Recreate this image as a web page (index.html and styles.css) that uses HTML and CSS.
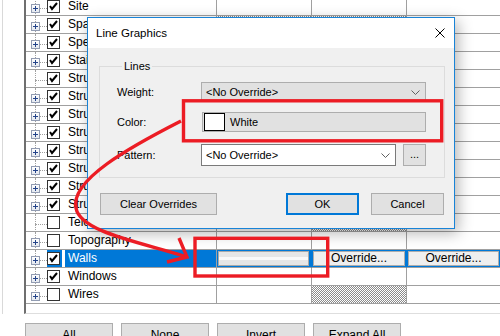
FILE: index.html
```html
<!DOCTYPE html>
<html lang="en">
<head>
    <meta charset="UTF-8">
    <meta name="viewport" content="width=device-width, initial-scale=1.0">
    <title>Visibility/Graphics - Line Graphics</title>
    <link rel="stylesheet" href="styles.css">
</head>
<body>
    <div class="main">
        <div class="gutter"></div>
        <div class="grid">
            <div class="row">
                <div class="cell name"><i class="node plus"></i><span class="box"><b class="check"><svg viewBox="0 0 11 11"><polyline points="2,5 4,8 9,2"/></svg></b></span><span class="label">Site</span></div>
                <div class="cell"></div><div class="cell"></div><div class="cell"></div>
            </div>
            <div class="row">
                <div class="cell name"><i class="node plus"></i><span class="box"><b class="check"><svg viewBox="0 0 11 11"><polyline points="2,5 4,8 9,2"/></svg></b></span><span class="label">Spaces</span></div>
                <div class="cell hatch"></div><div class="cell hatch"></div><div class="cell"></div>
            </div>
            <div class="row">
                <div class="cell name"><i class="node plus"></i><span class="box"><b class="check"><svg viewBox="0 0 11 11"><polyline points="2,5 4,8 9,2"/></svg></b></span><span class="label">Specialty Equipment</span></div>
                <div class="cell"></div><div class="cell"></div><div class="cell"></div>
            </div>
            <div class="row">
                <div class="cell name"><i class="node plus"></i><span class="box"><b class="check"><svg viewBox="0 0 11 11"><polyline points="2,5 4,8 9,2"/></svg></b></span><span class="label">Stairs</span></div>
                <div class="cell"></div><div class="cell"></div><div class="cell"></div>
            </div>
            <div class="row">
                <div class="cell name"><i class="node leaf"></i><span class="box"><b class="check"><svg viewBox="0 0 11 11"><polyline points="2,5 4,8 9,2"/></svg></b></span><span class="label">Structural Area Reinforcement</span></div>
                <div class="cell"></div><div class="cell"></div><div class="cell"></div>
            </div>
            <div class="row">
                <div class="cell name"><i class="node plus"></i><span class="box"><b class="check"><svg viewBox="0 0 11 11"><polyline points="2,5 4,8 9,2"/></svg></b></span><span class="label">Structural Beam Systems</span></div>
                <div class="cell"></div><div class="cell"></div><div class="cell"></div>
            </div>
            <div class="row">
                <div class="cell name"><i class="node plus"></i><span class="box"><b class="check"><svg viewBox="0 0 11 11"><polyline points="2,5 4,8 9,2"/></svg></b></span><span class="label">Structural Columns</span></div>
                <div class="cell"></div><div class="cell"></div><div class="cell"></div>
            </div>
            <div class="row">
                <div class="cell name"><i class="node plus"></i><span class="box"><b class="check"><svg viewBox="0 0 11 11"><polyline points="2,5 4,8 9,2"/></svg></b></span><span class="label">Structural Connections</span></div>
                <div class="cell"></div><div class="cell"></div><div class="cell"></div>
            </div>
            <div class="row">
                <div class="cell name"><i class="node plus"></i><span class="box"><b class="check"><svg viewBox="0 0 11 11"><polyline points="2,5 4,8 9,2"/></svg></b></span><span class="label">Structural Fabric Areas</span></div>
                <div class="cell"></div><div class="cell"></div><div class="cell"></div>
            </div>
            <div class="row">
                <div class="cell name"><i class="node plus"></i><span class="box"><b class="check"><svg viewBox="0 0 11 11"><polyline points="2,5 4,8 9,2"/></svg></b></span><span class="label">Structural Fabric Reinforcement</span></div>
                <div class="cell"></div><div class="cell"></div><div class="cell"></div>
            </div>
            <div class="row">
                <div class="cell name"><i class="node plus"></i><span class="box"><b class="check"><svg viewBox="0 0 11 11"><polyline points="2,5 4,8 9,2"/></svg></b></span><span class="label">Structural Foundations</span></div>
                <div class="cell"></div><div class="cell"></div><div class="cell"></div>
            </div>
            <div class="row">
                <div class="cell name"><i class="node plus"></i><span class="box"><b class="check"><svg viewBox="0 0 11 11"><polyline points="2,5 4,8 9,2"/></svg></b></span><span class="label">Structural Framing</span></div>
                <div class="cell"></div><div class="cell"></div><div class="cell"></div>
            </div>
            <div class="row">
                <div class="cell name"><i class="node leaf"></i><span class="box"><b class="check"></b></span><span class="label">Telephone Devices</span></div>
                <div class="cell"></div><div class="cell hatch"></div><div class="cell"></div>
            </div>
            <div class="row">
                <div class="cell name"><i class="node plus"></i><span class="box"><b class="check"></b></span><span class="label">Topography</span></div>
                <div class="cell"></div><div class="cell"></div><div class="cell"></div>
            </div>
            <div class="row sel">
                <div class="cell name"><i class="node plus"></i><span class="box"><b class="check"><svg viewBox="0 0 11 11"><polyline points="2,5 4,8 9,2"/></svg></b></span><span class="label">Walls</span></div>
                <div class="cell"><span class="line-btn"></span></div>
                <div class="cell"><span class="grid-btn">Override...</span></div>
                <div class="cell"><span class="grid-btn">Override...</span></div>
            </div>
            <div class="row">
                <div class="cell name"><i class="node plus"></i><span class="box"><b class="check"><svg viewBox="0 0 11 11"><polyline points="2,5 4,8 9,2"/></svg></b></span><span class="label">Windows</span></div>
                <div class="cell"></div><div class="cell"></div><div class="cell"></div>
            </div>
            <div class="row">
                <div class="cell name"><i class="node plus"></i><span class="box"><b class="check"></b></span><span class="label">Wires</span></div>
                <div class="cell"></div><div class="cell hatch"></div><div class="cell"></div>
            </div>
        </div>
    </div>

    <div class="actions">
        <button>All</button>
        <button>None</button>
        <button>Invert</button>
        <button>Expand All</button>
    </div>

    <div class="dialog">
        <div class="dialog-title">
            <span>Line Graphics</span>
            <svg class="close" width="10" height="10" viewBox="0 0 10 10"><path d="M0.5 0.5 9.5 9.5M9.5 0.5 0.5 9.5"/></svg>
        </div>
        <div class="dialog-body">
            <div class="group">
                <span class="group-title">Lines</span>
                <div class="field">
                    <label>Weight:</label>
                    <div class="combo">&lt;No Override&gt;<svg class="chev" width="9" height="5" viewBox="0 0 9 5"><path d="M0.5 0.5 4.5 4.5 8.5 0.5"/></svg></div>
                </div>
                <div class="field gap-1">
                    <label>Color:</label>
                    <div class="color-btn"><span class="swatch"></span>White</div>
                </div>
                <div class="field gap-2 tall">
                    <label>Pattern:</label>
                    <div class="combo edit">&lt;No Override&gt;<svg class="chev" width="9" height="5" viewBox="0 0 9 5"><path d="M0.5 0.5 4.5 4.5 8.5 0.5"/></svg></div>
                    <div class="more">...</div>
                </div>
            </div>
            <div class="dialog-buttons">
                <button class="wide">Clear Overrides</button>
                <div class="right">
                    <button class="default">OK</button>
                    <button>Cancel</button>
                </div>
            </div>
        </div>
    </div>

    <!-- red markup drawn over the screenshot -->
    <svg class="marks" width="500" height="336" viewBox="0 0 500 336">
        <rect x="183.5" y="100.8" width="258.2" height="40" />
        <rect x="195" y="238.3" width="132.7" height="37.7" />
        <path d="M181 121 C130 147 70 180 76 208 C80 232 140 242 187 257" />
        <path d="M179 238 L187 257 L167 262" />
    </svg>
</body>
</html>
```

FILE: styles.css
```css
* {
    box-sizing: border-box;
}

body {
    margin: 0;
    width: 500px;
    height: 336px;
    overflow: hidden;
    position: relative;
    background: #fff;
    color: #000;
    font-family: "Liberation Sans", Arial, sans-serif;
    font-size: 12px;
}

.main {
    display: flex;
    margin-top: -2px;
}

.gutter {
    width: 22px;
    margin-left: 2px;
    border-left: 1px solid #d9d9d9;
}

.grid {
    flex: 1;
    border-left: 2px solid #6f6f6f;
    border-bottom: 1px solid #dedede;
    padding-bottom: 9px;
}

.row {
    display: grid;
    grid-template-columns: 191px 95px 95px 1fr;
    height: 18px;
}

.cell {
    border-right: 1px solid #a0a0a0;
    border-bottom: 1px solid #a0a0a0;
}

.cell:last-child {
    border-right: none;
}

.cell.hatch {
    background: repeating-conic-gradient(#8a8a8a 0 25%, #fff 0 50%) 0 0 / 2px 2px;
}

.name {
    display: flex;
    align-items: flex-start;
    position: relative;
}

.name::before {
    content: "";
    position: absolute;
    left: 9px;
    top: 0;
    bottom: -1px;
    border-left: 1px dotted #a0a0a0;
}

.row:last-child .name::before {
    bottom: 8px;
}

.node {
    flex: none;
    width: 9px;
    height: 9px;
    margin: 6px 0 0 5px;
    position: relative;
}

.node::after {
    content: "";
    position: absolute;
    top: 4px;
    left: 4px;
    width: 12px;
    border-top: 1px dotted #a0a0a0;
}

.node.plus {
    z-index: 1;
    border: 1px solid #929cb2;
    background:
        linear-gradient(#23438a, #23438a) center / 5px 1px no-repeat,
        linear-gradient(#23438a, #23438a) center / 1px 5px no-repeat,
        linear-gradient(#fff, #e4e8ef);
}

.node.plus::after {
    top: 3px;
    left: 8px;
    width: 7px;
}

.box {
    flex: none;
    width: 15px;
    height: 17px;
    margin-left: 7px;
    padding-top: 2px;
}

.check {
    display: block;
    width: 13px;
    height: 13px;
    border: 1px solid #333;
    background: #fff;
}

.check svg {
    display: block;
    width: 11px;
    height: 11px;
    fill: none;
    stroke: #000;
    stroke-width: 2;
}

.label {
    flex: 1;
    height: 17px;
    margin-left: 3px;
    padding-left: 3px;
    line-height: 17px;
    white-space: nowrap;
    overflow: hidden;
}

.sel .box,
.sel .label {
    background: #0078d7;
}

.sel .label {
    color: #fff;
}

.sel .cell:not(.name) {
    display: flex;
    padding: 1px;
    background: #0078d7;
    border-right-color: #0078d7;
}

.sel .cell:nth-child(2) {
    padding-right: 2px;
}

.line-btn {
    flex: 1;
    border: 1px solid #a9a9a9;
    background: linear-gradient(#e6e6e6 0 40%, #f9f9f9 40% 60%, #e6e6e6 60%);
}

.grid-btn {
    flex: 1;
    border: 1px solid #adadad;
    background: #efefef;
    text-align: center;
    line-height: 13px;
}

.actions {
    display: flex;
    gap: 8px;
    margin: 9px 0 0 25px;
}

button {
    font-family: inherit;
    font-size: 12px;
    color: #000;
    background: #e1e1e1;
    border: 1px solid #adadad;
    padding: 0;
}

.actions button {
    width: 88px;
    height: 23px;
}

/* dialog */

.dialog {
    position: absolute;
    left: 87px;
    top: 17px;
    width: 368px;
    height: 212px;
    border: 1px solid #1883d7;
    background: #f0f0f0;
    box-shadow: 3px 4px 14px rgba(0, 0, 0, 0.3);
    font-size: 11px;
}

.dialog-title {
    height: 30px;
    display: flex;
    align-items: center;
    justify-content: space-between;
    padding: 0 9px 0 8px;
    background: #fff;
    font-size: 11.5px;
}

.close {
    stroke: #000;
    stroke-width: 1;
}

.dialog-body {
    padding: 18px 9px 0 11px;
}

.group {
    border: 1px solid #dcdcdc;
    padding: 0 17px 11px 17px;
}

.group-title {
    display: block;
    width: max-content;
    height: 15px;
    line-height: 15px;
    margin: -8px 0 0 5px;
    padding: 0 2px;
    background: #f0f0f0;
}

.field {
    display: flex;
    align-items: center;
    height: 20px;
    margin-top: 8px;
}

.field.gap-1 {
    margin-top: 10px;
}

.field.gap-2 {
    margin-top: 12px;
}

.field.tall {
    height: 22px;
}

.field label {
    width: 84px;
}

.combo {
    width: 225px;
    height: 20px;
    display: flex;
    align-items: center;
    padding-left: 4px;
    border: 1px solid #adadad;
    background: #e1e1e1;
}

.combo.edit {
    width: 195px;
    height: 22px;
    border-color: #7a7a7a;
    background: #fff;
}

.chev {
    margin-left: auto;
    margin-right: 5px;
    fill: none;
    stroke: #606060;
    stroke-width: 1;
}

.color-btn {
    width: 224px;
    height: 20px;
    margin-left: 1px;
    display: flex;
    align-items: center;
    padding-left: 1px;
    border: 1px solid #adadad;
    background: #e1e1e1;
}

.swatch {
    width: 21px;
    height: 18px;
    margin-right: 5px;
    border: 1px solid #000;
    background: #fff;
}

.more {
    width: 23px;
    height: 22px;
    margin-left: 7px;
    border: 1px solid #adadad;
    background: #e1e1e1;
    text-align: center;
    line-height: 18px;
}

.dialog-buttons {
    display: flex;
    justify-content: space-between;
    margin-top: 15px;
    padding: 0 1px;
}

.dialog-buttons button {
    height: 22px;
    font-size: 11px;
}

.dialog-buttons .wide {
    width: 117px;
}

.dialog-buttons .right {
    display: flex;
    gap: 12px;
}

.dialog-buttons .right button {
    width: 73px;
}

.dialog-buttons .default {
    border: 2px solid #0078d7;
}

.marks {
    position: absolute;
    left: 0;
    top: 0;
    pointer-events: none;
    fill: none;
    stroke: #ec1c24;
    stroke-width: 3.4;
}
```
